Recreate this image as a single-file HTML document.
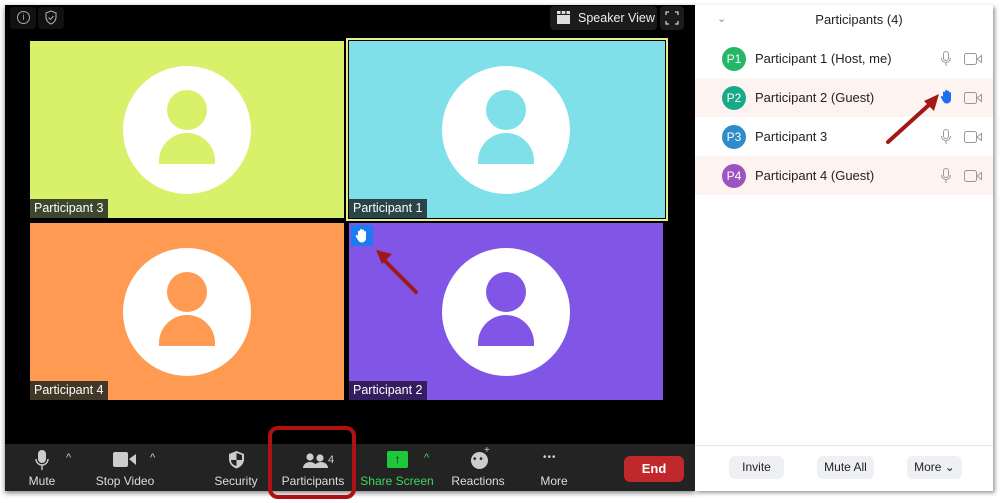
<!DOCTYPE html>
<html><head><meta charset="utf-8"><style>
*{margin:0;padding:0;box-sizing:border-box}
body{width:1000px;height:503px;background:#fff;position:relative;overflow:hidden;font-family:"Liberation Sans",sans-serif}
.a{position:absolute}
.main{left:5px;top:5px;width:690px;height:486px;background:#000;box-shadow:0 2px 5px rgba(0,0,0,.5)}
.tile{position:absolute;overflow:hidden}
.tile .c{position:absolute;left:93px;top:25px;width:128px;height:128px;border-radius:50%;background:#fff}
.tile .h{position:absolute;left:137px;top:49px;width:40px;height:40px;border-radius:50%}
.tile .b{position:absolute;left:129px;top:92px;width:56px;height:31px;border-radius:28px 28px 0 0}
.lbl{position:absolute;left:0;bottom:0;padding:2px 5px 3px 4px;color:#fff;font-size:12.5px;background:rgba(20,30,30,.8)}
.tb{left:5px;top:444px;width:690px;height:47px;background:#232323}
.ti{position:absolute;top:474px;color:#ddd;font-size:12px;text-align:center;transform:translateX(-50%);white-space:nowrap}
.panel{left:695px;top:5px;width:298px;height:486px;background:#fff;box-shadow:2px 2px 4px rgba(0,0,0,.4)}
.row{position:absolute;left:0;width:298px;height:39px}
.av{position:absolute;left:27px;top:8px;width:24px;height:24px;border-radius:50%;color:#fff;font-size:12px;line-height:24px;text-align:center}
.nm{position:absolute;left:60px;top:12px;font-size:13px;color:#222}
.btn{position:absolute;top:456px;height:23px;background:#eef0f4;border-radius:6px;font-size:12px;color:#222;text-align:center;line-height:23px}
</style></head><body>
<div class="a main"></div>
<div class="a" style="left:10px;top:7px;width:26px;height:22px;background:#111;border-radius:4px"></div>
<div class="a" style="left:17px;top:11px;width:13px;height:13px;border:1px solid #aaa;border-radius:50%;color:#aaa;font-size:9px;line-height:11px;text-align:center">i</div>
<div class="a" style="left:38px;top:7px;width:26px;height:22px;background:#111;border-radius:4px"></div>
<svg class="a" style="left:44px;top:10px" width="14" height="15" viewBox="0 0 14 15"><path d="M7 1L2 3v4c0 3.5 2.5 6 5 7 2.5-1 5-3.5 5-7V3z" fill="none" stroke="#aaa" stroke-width="1.1"/><path d="M4.5 7.5l2 2 3-3.5" fill="none" stroke="#aaa" stroke-width="1.1"/></svg>
<div class="a" style="left:550px;top:6px;width:107px;height:24px;background:#1b1b1e;border-radius:4px"></div>
<svg class="a" style="left:557px;top:11px" width="13" height="13"><rect x="0" y="0" width="3.5" height="3" fill="#ddd"/><rect x="4.75" y="0" width="3.5" height="3" fill="#ddd"/><rect x="9.5" y="0" width="3.5" height="3" fill="#ddd"/><rect x="0" y="4" width="13" height="9" fill="#ddd"/></svg>
<div class="a" style="left:578px;top:11px;color:#eee;font-size:12.5px">Speaker View</div>
<div class="a" style="left:660px;top:6px;width:24px;height:24px;background:#1b1b1e;border-radius:4px"></div>
<svg class="a" style="left:665px;top:11px" width="14" height="14"><path d="M1 4V1h3M10 1h3v3M13 10v3h-3M4 13H1v-3" fill="none" stroke="#ccc" stroke-width="1.3"/></svg>

<div class="tile" style="left:30px;top:41px;width:314px;height:177px;background:#d8f06a"><div class="c"></div><div class="h" style="background:#d8f06a"></div><div class="b" style="background:#d8f06a"></div><div class="lbl">Participant 3</div></div>
<div class="a" style="left:346px;top:38px;width:322px;height:183px;border:2px solid #e9ef8a"></div>
<div class="tile" style="left:349px;top:41px;width:316px;height:177px;background:#7fe0ea"><div class="c"></div><div class="h" style="background:#7fe0ea"></div><div class="b" style="background:#7fe0ea"></div><div class="lbl">Participant 1</div></div>
<div class="tile" style="left:30px;top:223px;width:314px;height:177px;background:#ff9a52"><div class="c"></div><div class="h" style="background:#ff9a52"></div><div class="b" style="background:#ff9a52"></div><div class="lbl">Participant 4</div></div>
<div class="tile" style="left:349px;top:223px;width:314px;height:177px;background:#8155e6"><div class="c"></div><div class="h" style="background:#8155e6"></div><div class="b" style="background:#8155e6"></div><div class="lbl" style="background:rgba(40,20,70,.85)">Participant 2</div></div>
<div class="a" style="left:351px;top:225px;width:22px;height:21px;background:#1a7cf0;border-radius:3px"></div>
<svg class="a" style="left:355px;top:228px" width="14" height="15" viewBox="0 0 14 15"><path d="M3 8V3.5a1 1 0 0 1 2 0V7V2a1 1 0 0 1 2 0v5V2.5a1 1 0 0 1 2 0V7.5V4a1 1 0 0 1 2 0v6c0 3-2 4.5-4.5 4.5C4.5 14.5 3.5 13 2 10.5L0.8 8.3a1 1 0 0 1 1.7-1z" fill="#fff"/></svg>
<svg class="a" style="left:370px;top:240px" width="55" height="60"><path d="M46 52L14 20" stroke="#a01818" stroke-width="4" stroke-linecap="round"/><path d="M6 10l16 4-10 10z" fill="#a01818"/></svg>

<div class="a tb"></div>
<svg class="a" style="left:35px;top:450px" width="14" height="22"><rect x="3" y="0" width="8" height="13" rx="4" fill="#ccc"/><path d="M1 9a6 6 0 0 0 12 0M7 15v5" fill="none" stroke="#ccc" stroke-width="1.4"/></svg>
<div class="a" style="left:66px;top:452px;color:#ccc;font-size:11px">^</div>
<div class="ti" style="left:42px">Mute</div>
<svg class="a" style="left:113px;top:452px" width="24" height="15"><rect x="0" y="0" width="15" height="15" rx="2" fill="#ccc"/><path d="M16 7l7-5v11z" fill="#ccc"/></svg>
<div class="a" style="left:150px;top:452px;color:#ccc;font-size:11px">^</div>
<div class="ti" style="left:125px">Stop Video</div>
<svg class="a" style="left:228px;top:450px" width="17" height="19"><path d="M8.5 1L1 4v5c0 5 3.5 8 7.5 9.5C12.5 17 16 14 16 9V4z" fill="#ccc"/><path d="M8.5 3v7H14V5z" fill="#232323"/><path d="M3 10h5.5v6C5 15 3 13 3 10z" fill="#232323"/></svg>
<div class="ti" style="left:236px">Security</div>
<svg class="a" style="left:302px;top:453px" width="26" height="16"><circle cx="8" cy="4" r="3.6" fill="#ccc"/><path d="M1 15a7 6 0 0 1 14 0z" fill="#ccc"/><circle cx="18" cy="5" r="3.6" fill="#ccc"/><path d="M12 15a7 6 0 0 1 14 0z" fill="#ccc"/></svg>
<div class="a" style="left:328px;top:454px;color:#ccc;font-size:11px">4</div>
<div class="ti" style="left:313px">Participants</div>
<div class="a" style="left:268px;top:426px;width:88px;height:73px;border:4px solid #b00f14;border-radius:10px"></div>
<div class="a" style="left:387px;top:451px;width:21px;height:17px;background:#1ec83a;border-radius:2px;color:#111;font-size:12px;text-align:center;line-height:17px;font-weight:bold">↑</div>
<div class="a" style="left:424px;top:452px;color:#3ed860;font-size:11px">^</div>
<div class="ti" style="left:397px;color:#3ed860">Share Screen</div>
<div class="a" style="left:471px;top:452px;width:17px;height:17px;border-radius:50%;background:#ccc"></div>
<div class="a" style="left:473px;top:454px;font-size:10px;color:#232323">• •</div>
<div class="a" style="left:484px;top:445px;color:#ccc;font-size:10px">+</div>
<div class="ti" style="left:478px">Reactions</div>
<div class="a" style="left:543px;top:452px;color:#ccc;font-size:10px;letter-spacing:1px">•••</div>
<div class="ti" style="left:554px">More</div>
<div class="a" style="left:624px;top:456px;width:60px;height:26px;background:#c0282b;border-radius:6px;color:#fff;font-weight:bold;font-size:13px;text-align:center;line-height:26px">End</div>

<div class="a panel">
<div class="a" style="left:22px;top:7px;color:#888;font-size:11px">⌄</div>
<div class="a" style="left:0;width:298px;top:7px;text-align:center;font-size:13px;color:#222;padding-left:30px">Participants (4)</div>
<div class="row" style="top:34px"><div class="av" style="background:#27b567">P1</div><div class="nm">Participant 1 (Host, me)</div></div>
<div class="row" style="top:73px;background:#fdf3f0"><div class="av" style="background:#17a98a">P2</div><div class="nm">Participant 2 (Guest)</div></div>
<div class="row" style="top:112px"><div class="av" style="background:#2e8dc8">P3</div><div class="nm">Participant 3</div></div>
<div class="row" style="top:151px;background:#fdf3f0"><div class="av" style="background:#9b55c0">P4</div><div class="nm">Participant 4 (Guest)</div></div>
<div class="a" style="left:0;top:440px;width:298px;height:1px;background:#e6e8ee"></div>
</div>
<svg class="a" style="left:941px;top:51px" width="10" height="16"><rect x="2.5" y="0.5" width="5" height="9" rx="2.5" fill="none" stroke="#999"/><path d="M0.5 7a4.5 4.5 0 0 0 9 0M5 12v3" fill="none" stroke="#999"/></svg>
<svg class="a" style="left:941px;top:129px" width="10" height="16"><rect x="2.5" y="0.5" width="5" height="9" rx="2.5" fill="none" stroke="#999"/><path d="M0.5 7a4.5 4.5 0 0 0 9 0M5 12v3" fill="none" stroke="#999"/></svg>
<svg class="a" style="left:941px;top:168px" width="10" height="16"><rect x="2.5" y="0.5" width="5" height="9" rx="2.5" fill="none" stroke="#999"/><path d="M0.5 7a4.5 4.5 0 0 0 9 0M5 12v3" fill="none" stroke="#999"/></svg>
<svg class="a" style="left:940px;top:89px" width="14" height="15" viewBox="0 0 14 15"><path d="M3 8V3.5a1 1 0 0 1 2 0V7V2a1 1 0 0 1 2 0v5V2.5a1 1 0 0 1 2 0V7.5V4a1 1 0 0 1 2 0v6c0 3-2 4.5-4.5 4.5C4.5 14.5 3.5 13 2 10.5L0.8 8.3a1 1 0 0 1 1.7-1z" fill="#1a6ef0"/></svg>
<svg class="a" style="left:964px;top:53px" width="18" height="12"><rect x="0.5" y="0.5" width="12" height="11" rx="2" fill="none" stroke="#999"/><path d="M13 6l4.5-3.5v7z" fill="none" stroke="#999"/></svg>
<svg class="a" style="left:964px;top:92px" width="18" height="12"><rect x="0.5" y="0.5" width="12" height="11" rx="2" fill="none" stroke="#999"/><path d="M13 6l4.5-3.5v7z" fill="none" stroke="#999"/></svg>
<svg class="a" style="left:964px;top:131px" width="18" height="12"><rect x="0.5" y="0.5" width="12" height="11" rx="2" fill="none" stroke="#999"/><path d="M13 6l4.5-3.5v7z" fill="none" stroke="#999"/></svg>
<svg class="a" style="left:964px;top:170px" width="18" height="12"><rect x="0.5" y="0.5" width="12" height="11" rx="2" fill="none" stroke="#999"/><path d="M13 6l4.5-3.5v7z" fill="none" stroke="#999"/></svg>
<svg class="a" style="left:882px;top:82px" width="60" height="65"><path d="M6 60L48 22" stroke="#a01818" stroke-width="4" stroke-linecap="round"/><path d="M57 12l-5 17-10-10z" fill="#a01818"/></svg>
<div class="btn" style="left:729px;width:55px">Invite</div>
<div class="btn" style="left:817px;width:57px">Mute All</div>
<div class="btn" style="left:907px;width:55px">More ⌄</div>
</body></html>
